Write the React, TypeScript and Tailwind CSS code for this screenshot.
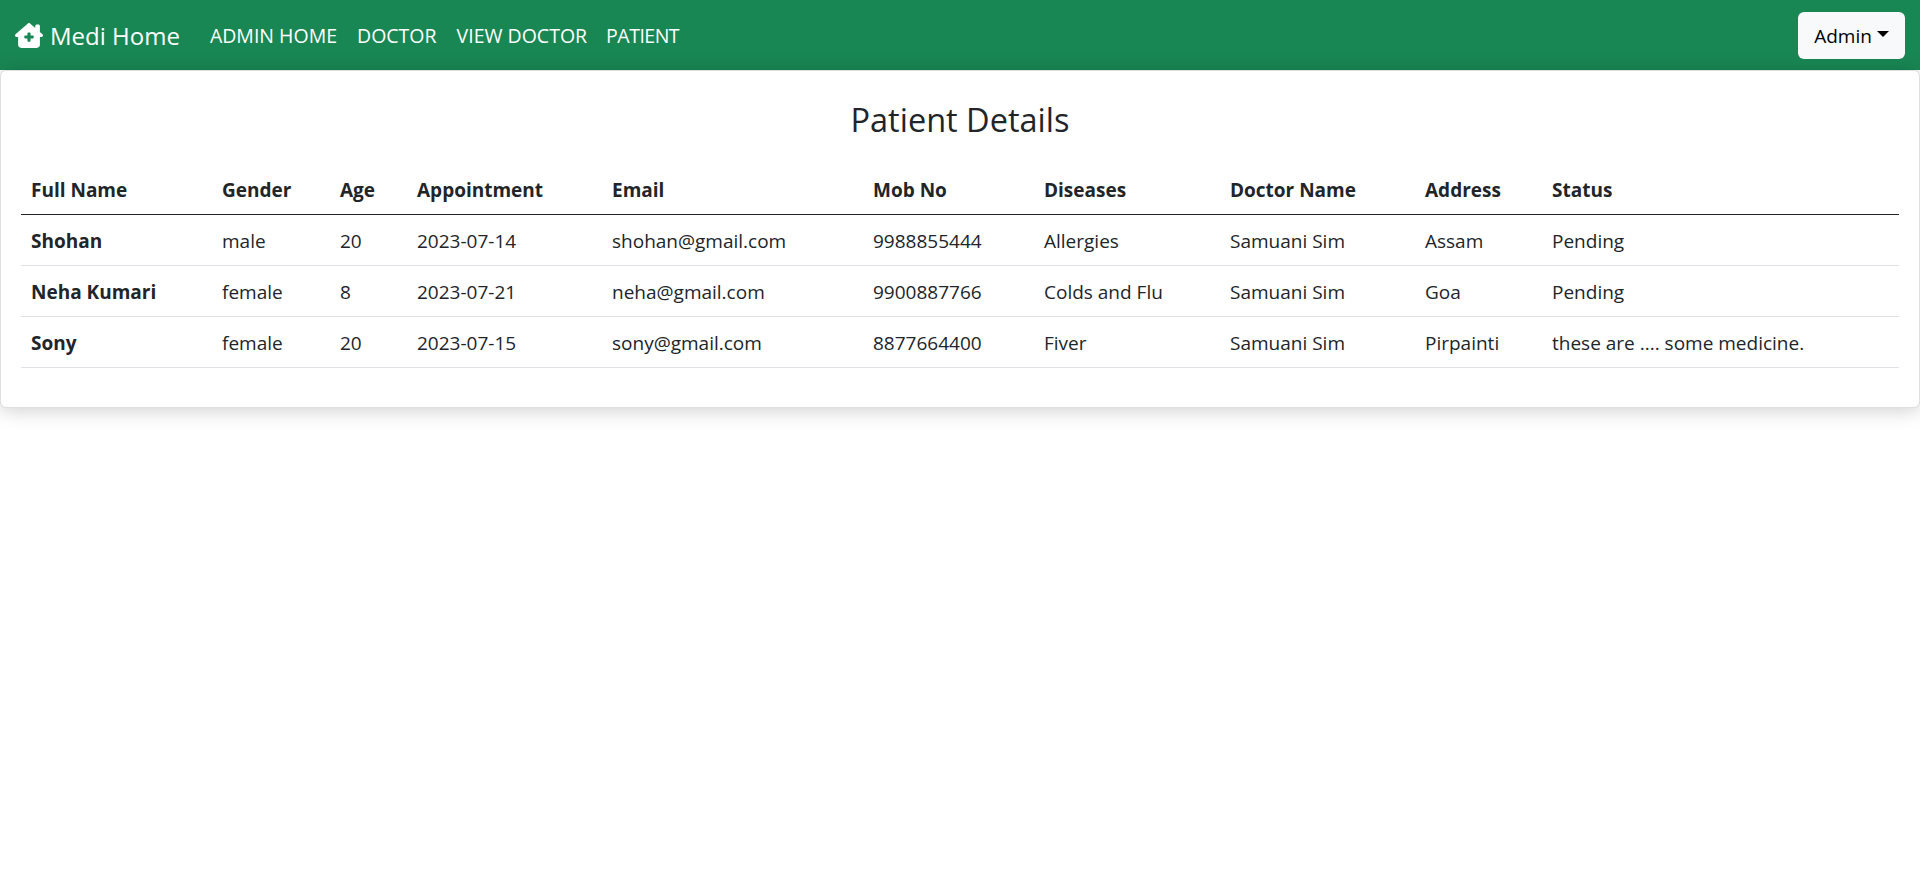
import { FaHouseChimneyMedical } from 'react-icons/fa6';

const navLinks = [
  { label: 'ADMIN HOME', className: '' },
  { label: 'DOCTOR', className: '' },
  { label: 'VIEW DOCTOR', className: '' },
  { label: 'PATIENT', className: '-ml-[1px] tracking-[-0.5px]' },
];

const columns = [
  { label: 'Full Name', width: 'w-[191px]' },
  { label: 'Gender', width: 'w-[118px]' },
  { label: 'Age', width: 'w-[77px]' },
  { label: 'Appointment', width: 'w-[195px]' },
  { label: 'Email', width: 'w-[261px]' },
  { label: 'Mob No', width: 'w-[171px]' },
  { label: 'Diseases', width: 'w-[186px]' },
  { label: 'Doctor Name', width: 'w-[195px]' },
  { label: 'Address', width: 'w-[127px]' },
  { label: 'Status', width: '' },
];

const patients = [
  ['Shohan', 'male', '20', '2023-07-14', 'shohan@gmail.com', '9988855444', 'Allergies', 'Samuani Sim', 'Assam', 'Pending'],
  ['Neha Kumari', 'female', '8', '2023-07-21', 'neha@gmail.com', '9900887766', 'Colds and Flu', 'Samuani Sim', 'Goa', 'Pending'],
  ['Sony', 'female', '20', '2023-07-15', 'sony@gmail.com', '8877664400', 'Fiver', 'Samuani Sim', 'Pirpainti', 'these are .... some medicine.'],
];

export default function App() {
  return (
    <div className="min-h-[878px] bg-white font-['Open_Sans',sans-serif] text-[19px] leading-[30px] text-[#212529]">
      <nav className="flex h-[70px] items-center justify-between bg-[#198754] px-[15px]">
        <div className="flex items-center">
          <a className="mr-[30px] flex items-center text-white">
            <FaHouseChimneyMedical className="mr-[7px] h-[25px] w-[28px]" />
            <span className="pt-[1px] text-[24px] leading-[37px]">Medi Home</span>
          </a>
          <ul className="flex gap-[20px] pt-[2px] text-[19.5px]">
            {navLinks.map((link) => (
              <li key={link.label} className={`text-white ${link.className}`}>
                {link.label}
              </li>
            ))}
          </ul>
        </div>
        <button className="flex h-[47px] w-[107px] items-center justify-center rounded-[6px] bg-[#f8f9fa] pt-[1px] text-black">
          Admin
          <span className="mb-[3px] ml-[5px] border-x-[6px] border-t-[6px] border-x-transparent border-t-black" />
        </button>
      </nav>

      <div className="h-[338px] rounded-[6px] border border-[rgba(0,0,0,0.125)] bg-white p-[20px] shadow-[0_2px_20px_rgba(0,0,0,0.2)]">
        <h3 className="mt-[8px] text-center text-[32.5px] leading-[42px]">Patient Details</h3>
        <table className="mt-[23px] w-full table-fixed border-separate border-spacing-0">
          <thead>
            <tr>
              {columns.map((col) => (
                <th key={col.label} className={`${col.width} border-b border-[#212529] px-[10px] pb-[9px] pt-[11px] text-left font-bold`}>
                  {col.label}
                </th>
              ))}
            </tr>
          </thead>
          <tbody>
            {patients.map((row) => (
              <tr key={row[0]}>
                {row.map((cell, i) =>
                  i === 0 ? (
                    <th key={i} className="border-b border-[#dee2e6] px-[10px] pb-[9px] pt-[11px] text-left font-bold">
                      {cell}
                    </th>
                  ) : (
                    <td key={i} className="border-b border-[#dee2e6] px-[10px] pb-[9px] pt-[11px]">
                      {cell}
                    </td>
                  ),
                )}
              </tr>
            ))}
          </tbody>
        </table>
      </div>
    </div>
  );
}
